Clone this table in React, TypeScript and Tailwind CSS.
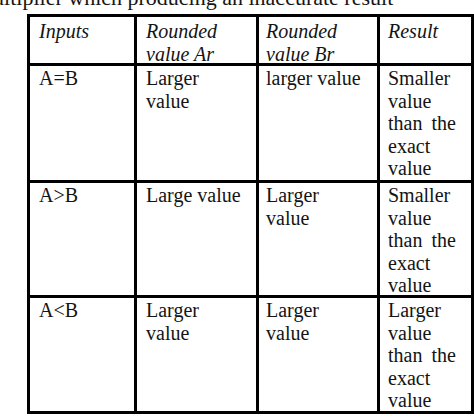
import React from 'react';

type Row = { input: string; ar: string; br: string; result: string };

const rows: Row[] = [
  { input: 'A=B', ar: 'Larger value', br: 'larger value', result: 'Smaller value than the exact value' },
  { input: 'A>B', ar: 'Large value', br: 'Larger value', result: 'Smaller value than the exact value' },
  { input: 'A<B', ar: 'Larger value', br: 'Larger value', result: 'Larger value than the exact value' },
];

const headers = ['Inputs', 'Rounded value Ar', 'Rounded value Br', 'Result'];

// per-column padding so the wraps land where the scan has them
const colPad = [
  'pl-[9px] pr-[10px]',
  'pl-[9px] pr-[12px]',
  'pl-[7px] pr-[13px]',
  'pl-[8px] pr-[15px] text-justify',
];

const cell = 'border-r-[3px] border-b-[3px] border-black';

const App: React.FC = () => {
  return (
    <div
      className="w-[474px] h-[416px] bg-white overflow-hidden text-[#141414]"
      style={{ fontFamily: '"Liberation Serif", "Times New Roman", serif' }}
    >
      {/* caption line, only its lower part is in frame */}
      <div className="h-[14px] overflow-hidden">
        <div className="-mt-[14px] -ml-[24px] text-[22px] leading-[24px] whitespace-nowrap">
          multiplier which producing an inaccurate result
        </div>
      </div>

      <div className="ml-[27px] w-fit border-l-[3px] border-t-[3px] border-black grid grid-cols-[107px_122px_121px_94px] grid-rows-[49px_117px_115px_116px]">
        {headers.map((h, i) => (
          <div key={h} className={`${cell} ${colPad[i]} pt-[3px] italic text-[20px] leading-[23px]`}>
            {h}
          </div>
        ))}
        {rows.map((r) =>
          [r.input, r.ar, r.br, r.result].map((t, i) => (
            <div key={r.input + i} className={`${cell} ${colPad[i]} pt-[1px] text-[20px] leading-[22.5px]`}>
              {t}
            </div>
          ))
        )}
      </div>
    </div>
  );
};

export default App;
